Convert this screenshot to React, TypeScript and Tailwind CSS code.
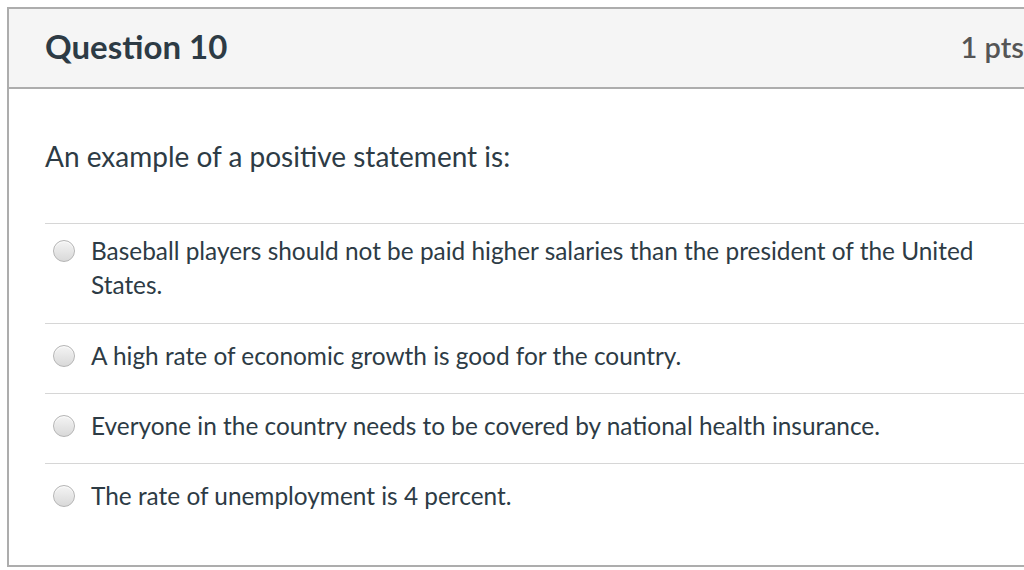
const options = [
  "Baseball players should not be paid higher salaries than the president of the United States.",
  "A high rate of economic growth is good for the country.",
  "Everyone in the country needs to be covered by national health insurance.",
  "The rate of unemployment is 4 percent.",
];

function Radio() {
  return (
    <span className="mt-[6px] block h-[22px] w-[22px] shrink-0 rounded-full border border-[#b5b5b5] bg-gradient-to-b from-[#f4f4f4] to-[#d9d9d9] shadow-[inset_0_1px_1px_rgba(255,255,255,0.8)]" />
  );
}

export default function App() {
  return (
    <div className="h-[570px] w-[1024px] overflow-hidden bg-white font-['Lato','Noto_Sans',sans-serif] text-[#2d3b45]">
      <div className="ml-[7px] mt-[7px] w-[1045px] border-2 border-[#adadad]">
        <div className="flex h-[80px] items-center justify-between border-b-2 border-[#adadad] bg-[#f5f5f5] pb-[2px] pl-[36px] pr-[26px]">
          <h2 className="text-[33px] font-bold">Question 10</h2>
          <span className="text-[29px] font-semibold text-[#555555]">1 pts</span>
        </div>
        <div className="pb-[32px] pl-[36px] pt-[50px]">
          <p className="text-[28px] leading-[34px]">An example of a positive statement is:</p>
          <div className="mt-[50px]">
            {options.map((o, i) => (
              <div
                key={o}
                className={
                  i === 0
                    ? "flex gap-[16px] border-t border-[#d6d6d6] pb-[21px] pl-[8px] pr-[60px] pt-[10px]"
                    : "flex gap-[16px] border-t border-[#d6d6d6] pb-[20px] pl-[8px] pr-[60px] pt-[15px]"
                }
              >
                <Radio />
                <span className="text-[24.4px] leading-[34px]">{o}</span>
              </div>
            ))}
          </div>
        </div>
      </div>
    </div>
  );
}
